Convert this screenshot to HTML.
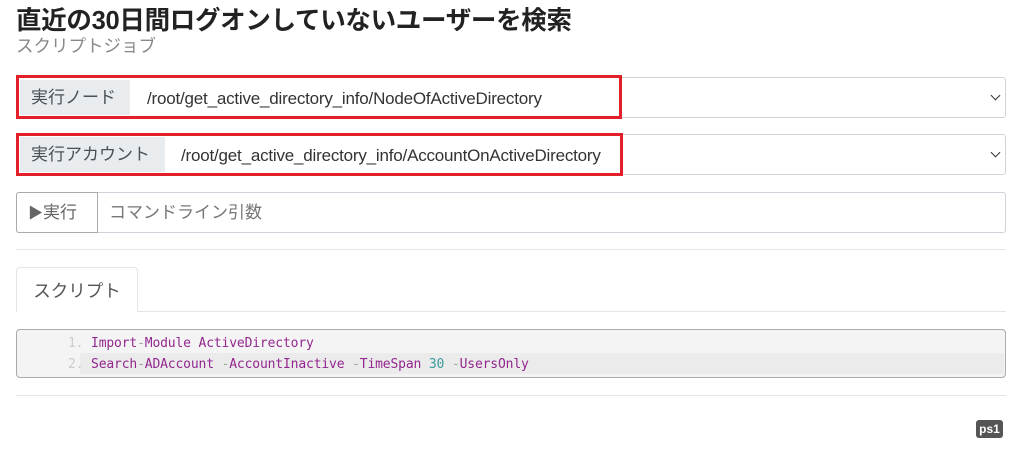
<!DOCTYPE html>
<html><head><meta charset="utf-8"><style>
*{box-sizing:border-box;margin:0;padding:0}
body{width:1024px;height:457px;background:#fff;font-family:"Liberation Sans","Noto Sans CJK JP",sans-serif;color:#212529;position:relative;overflow:hidden}
.abs{position:absolute}
h1{position:absolute;left:16px;top:5px;font-size:25.5px;font-weight:bold;color:#222;line-height:32px;letter-spacing:-0.3px}
.sub{left:16px;top:35px;font-size:17.5px;color:#888;line-height:22px}
.sel{left:16px;width:990px;height:41px;border:1px solid #ced4da;border-radius:3px}
.lbl{position:absolute;left:3px;top:2px;bottom:2px;background:#e9ecef;color:#495057;font-size:17px;padding-left:11px;line-height:35px}
.val{position:absolute;top:0;line-height:41px;font-size:17px;color:#333;letter-spacing:-0.2px}
.red{border:3px solid #e3202a}
.chev{position:absolute;right:6px;top:14px;width:7px;height:7px;border-right:1.8px solid #333;border-bottom:1.8px solid #333;transform:rotate(45deg)}
.code{font-family:"DejaVu Sans Mono","Liberation Mono",monospace;font-size:13px;letter-spacing:-0.15px}
</style></head><body>
<h1>直近の30日間ログオンしていないユーザーを検索</h1>
<div class="abs sub">スクリプトジョブ</div>

<div class="abs sel" style="top:77px"><div class="lbl" style="width:110px">実行ノード</div><div class="val" style="left:130px">/root/get_active_directory_info/NodeOfActiveDirectory</div><div class="chev"></div></div>
<div class="abs red" style="left:16px;top:75px;width:606px;height:44px"></div>

<div class="abs sel" style="top:134px"><div class="lbl" style="width:145px">実行アカウント</div><div class="val" style="left:164px">/root/get_active_directory_info/AccountOnActiveDirectory</div><div class="chev"></div></div>
<div class="abs red" style="left:16px;top:133px;width:607px;height:43px"></div>

<div class="abs" style="left:16px;top:192px;width:990px;height:41px;border:1px solid #ced4da;border-radius:3px"></div>
<div class="abs" style="left:16px;top:192px;width:82px;height:41px;border:1px solid #aaa;border-radius:3px 0 0 3px;font-size:17px;color:#666;line-height:39px;padding-left:11px"><span style="font-size:15px;color:#666">▶</span>実行</div>
<div class="abs" style="left:109px;top:192px;line-height:41px;font-size:17px;color:#777">コマンドライン引数</div>

<div class="abs" style="left:16px;top:249px;width:990px;border-top:1px solid #e5e5e5"></div>
<div class="abs" style="left:16px;top:311px;width:990px;border-top:1px solid #e5e5e5"></div>
<div class="abs" style="left:16px;top:267px;width:122px;height:45px;border:1px solid #e5e5e5;border-bottom:none;border-radius:4px 4px 0 0;background:#fff;font-size:17.5px;color:#555;line-height:46px;text-align:center">スクリプト</div>

<div class="abs" style="left:16px;top:329px;width:990px;height:49px;border:1px solid #aaa;border-radius:4px;background:#f4f4f4"></div>
<div class="abs" style="left:80px;top:353px;width:924px;height:21px;background:#ebebeb"></div>
<div class="abs code" style="left:68px;top:333px;line-height:21px;white-space:pre"><span style="color:#ccc">1. </span><span style="color:#93278f">Import</span><span style="color:#9a9">-</span><span style="color:#93278f">Module ActiveDirectory</span>
<span style="color:#ccc">2. </span><span style="color:#93278f">Search</span><span style="color:#9a9">-</span><span style="color:#93278f">ADAccount </span><span style="color:#9a9">-</span><span style="color:#93278f">AccountInactive </span><span style="color:#9a9">-</span><span style="color:#93278f">TimeSpan </span><span style="color:#3a9a9a">30</span> <span style="color:#9a9">-</span><span style="color:#93278f">UsersOnly</span></div>

<div class="abs" style="left:16px;top:395px;width:990px;border-top:1px solid #e5e5e5"></div>
<div class="abs" style="left:976px;top:420px;width:27px;height:18px;background:#555;border-radius:3px;color:#fff;font-size:12px;font-weight:bold;text-align:center;line-height:18px">ps1</div>
</body></html>
